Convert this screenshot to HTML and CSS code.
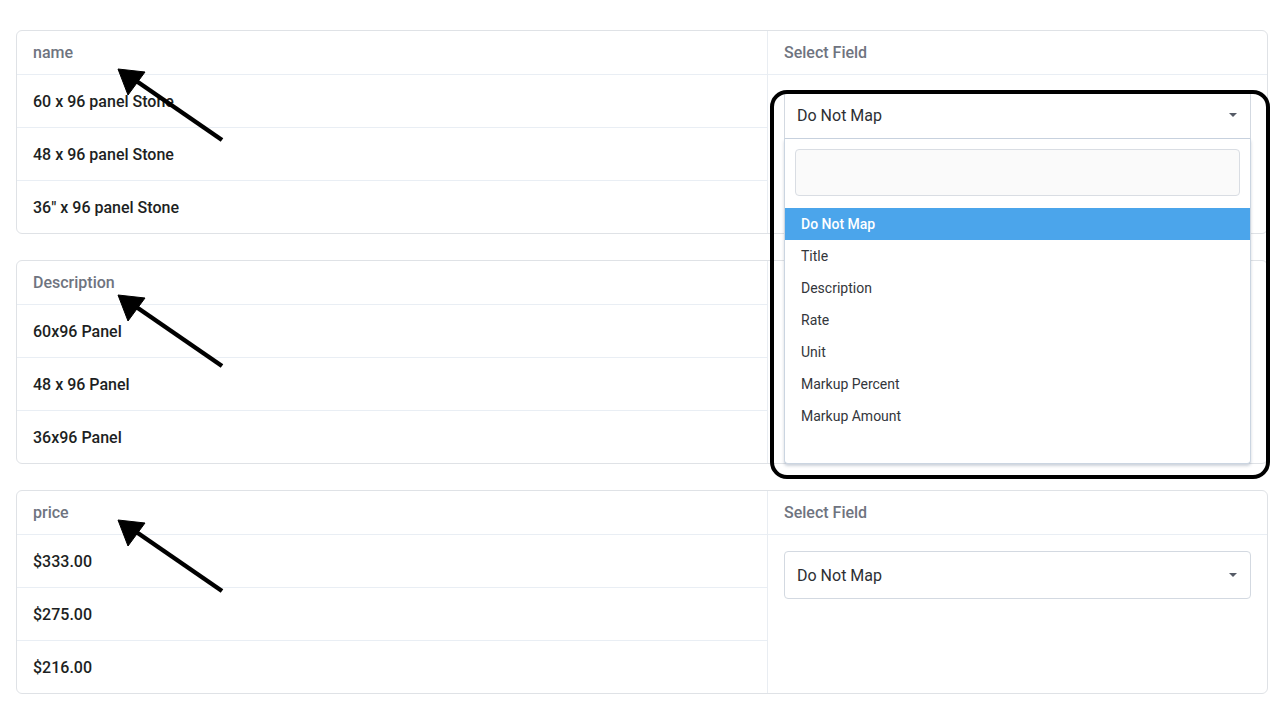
FILE: index.html
```html
<!DOCTYPE html>
<html>
<head>
    <meta charset="utf-8">
    <meta name="viewport" content="width=device-width, initial-scale=1">
    <title>Map Fields</title>
    <link rel="stylesheet" href="styles.css">
</head>
<body>
    <div class="page">
        <div class="map-card">
            <div class="col-source">
                <div class="cell head">name</div>
                <div class="cell">60 x 96 panel Stone</div>
                <div class="cell">48 x 96 panel Stone</div>
                <div class="cell last">36" x 96 panel Stone</div>
            </div>
            <div class="col-target">
                <div class="cell head">Select Field</div>
                <div class="target-body">
                    <div class="select-wrap open">
                        <div class="select">
                            <span>Do Not Map</span>
                            <span class="caret"></span>
                        </div>
                        <div class="dropdown">
                            <div class="search-box"><input type="text"></div>
                            <ul class="options">
                                <li class="active">Do Not Map</li>
                                <li>Title</li>
                                <li>Description</li>
                                <li>Rate</li>
                                <li>Unit</li>
                                <li>Markup Percent</li>
                                <li>Markup Amount</li>
                            </ul>
                        </div>
                    </div>
                </div>
            </div>
        </div>

        <div class="map-card">
            <div class="col-source">
                <div class="cell head">Description</div>
                <div class="cell">60x96 Panel</div>
                <div class="cell">48 x 96 Panel</div>
                <div class="cell last">36x96 Panel</div>
            </div>
            <!-- this column sits under the open dropdown -->
            <div class="col-target covered">
                <div class="cell head">Select Field</div>
                <div class="target-body">
                    <div class="select-wrap">
                        <div class="select">
                            <span>Do Not Map</span>
                            <span class="caret"></span>
                        </div>
                    </div>
                </div>
            </div>
        </div>

        <div class="map-card">
            <div class="col-source">
                <div class="cell head">price</div>
                <div class="cell">$333.00</div>
                <div class="cell">$275.00</div>
                <div class="cell last">$216.00</div>
            </div>
            <div class="col-target">
                <div class="cell head">Select Field</div>
                <div class="target-body">
                    <div class="select-wrap">
                        <div class="select">
                            <span>Do Not Map</span>
                            <span class="caret"></span>
                        </div>
                    </div>
                </div>
            </div>
        </div>

        <!-- annotations drawn over the screenshot -->
        <div class="highlight-box"></div>
        <svg class="arrows" width="1280" height="712" viewBox="0 0 1280 712">
            <g fill="#000" stroke="#000">
                <line x1="222" y1="140" x2="132" y2="78" stroke-width="4.5"/>
                <polygon points="118,69 145,72 128,95" stroke-width="1"/>
                <line x1="222" y1="366" x2="132" y2="304" stroke-width="4.5"/>
                <polygon points="118,295 145,298 128,321" stroke-width="1"/>
                <line x1="222" y1="591" x2="132" y2="529" stroke-width="4.5"/>
                <polygon points="118,520 145,523 128,546" stroke-width="1"/>
            </g>
        </svg>
    </div>
</body>
</html>
```

FILE: styles.css
```css
body {
    margin: 0;
    font-family: Roboto, "Liberation Sans", Arial, sans-serif;
    color: #1f2226;
    background: #fff;
}
.page {
    position: relative;
    padding: 30px 12px 0 16px;
    display: flex;
    flex-direction: column;
    gap: 26px;
}
.map-card {
    display: grid;
    grid-template-columns: 751px 1fr;
    border: 1px solid #dfe2e6;
    border-radius: 6px;
}
.col-source {
    border-right: 1px solid #e9edf2;
}
.covered .cell,
.covered .select {
    visibility: hidden;
}
.cell {
    height: 52px;
    display: flex;
    align-items: center;
    padding: 0 16px;
    font-size: 16px;
    font-weight: 500;
    color: #1d1f23;
    border-bottom: 1px solid #e9eef4;
}
.cell.last {
    border-bottom: none;
}
.cell.head {
    height: 43px;
    color: #6f7480;
}
.target-body {
    padding: 16px;
}
.select-wrap {
    position: relative;
}
.select {
    height: 46px;
    border: 1px solid #d3d9e1;
    border-radius: 4px;
    display: flex;
    align-items: center;
    justify-content: space-between;
    padding: 0 12px;
    font-size: 16px;
    color: #2d2f33;
}
.select-wrap.open .select {
    border-radius: 4px 4px 0 0;
    border-bottom-color: #c9d3df;
}
.caret {
    width: 0;
    height: 0;
    border-left: 4px solid transparent;
    border-right: 4px solid transparent;
    border-top: 4px solid #555b66;
    margin-right: 1px;
}
.dropdown {
    position: absolute;
    top: 100%;
    left: 0;
    right: 0;
    height: 324px;
    background: #fff;
    border: 1px solid #cbd5e1;
    border-top: none;
    border-radius: 0 0 4px 4px;
    box-shadow: 0 2px 3px rgba(60, 80, 110, 0.25);
    z-index: 5;
}
.search-box {
    padding: 10px 10px 12px;
}
.search-box input {
    display: block;
    width: 100%;
    height: 47px;
    box-sizing: border-box;
    border: 1px solid #d9dde3;
    border-radius: 4px;
    background: #fafafa;
}
.options {
    list-style: none;
    margin: 0;
    padding: 0;
}
.options li {
    height: 32px;
    line-height: 32px;
    padding: 0 16px;
    font-size: 14px;
    color: #33363b;
}
.options li.active {
    background: #4ba5eb;
    color: #fff;
    font-weight: 500;
}
.highlight-box {
    position: absolute;
    left: 770px;
    top: 90px;
    width: 492px;
    height: 381px;
    border: 4px solid #000;
    border-radius: 17px;
    z-index: 6;
    pointer-events: none;
}
.arrows {
    position: absolute;
    left: 0;
    top: 0;
    z-index: 7;
    pointer-events: none;
}
```
